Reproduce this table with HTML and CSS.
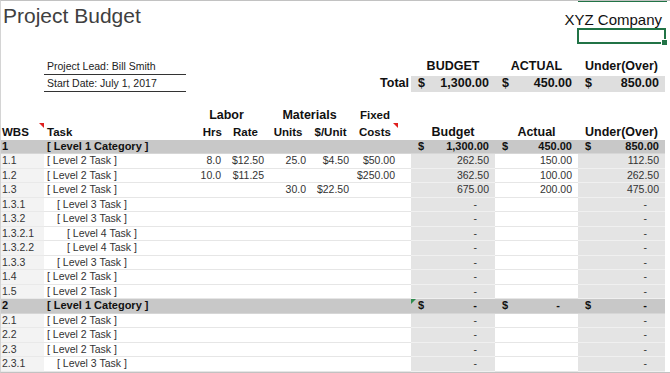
FILE: index.html
```html
<!DOCTYPE html>
<html lang="en">
<head>
<meta charset="utf-8">
<title>Project Budget</title>
<link rel="stylesheet" href="styles.css">
</head>
<body>
<div class="sheet">
  <div class="top grid">
    <h1 class="title">Project Budget</h1>
    <div class="company">XYZ Company</div>
    <div class="selbox"></div>
  </div>

  <div class="summary grid">
    <div class="lead r1">Project Lead: Bill Smith</div>
    <div class="lead r2">Start Date: July 1, 2017</div>
    <div class="sumhead c9">BUDGET</div>
    <div class="sumhead c10">ACTUAL</div>
    <div class="sumhead c11">Under(Over)</div>
    <div class="totlabel">Total</div>
    <div class="tot c9"><span>$</span><span>1,300.00</span></div>
    <div class="tot c10"><span>$</span><span>450.00</span></div>
    <div class="tot c11"><span>$</span><span>850.00</span></div>
  </div>

  <div class="thead grid">
    <div class="h1 labor">Labor</div>
    <div class="h1 materials">Materials</div>
    <div class="h1 small fixed">Fixed</div>
    <div class="h2 small wbsh note">WBS</div>
    <div class="h2 small taskh">Task</div>
    <div class="h2 small hrs">Hrs</div>
    <div class="h2 small ctr">Rate</div>
    <div class="h2 small ctr">Units</div>
    <div class="h2 small ctr">$/Unit</div>
    <div class="h2 small ctr note">Costs</div>
    <div class="h2 spacer"></div>
    <div class="h2 big">Budget</div>
    <div class="h2 big">Actual</div>
    <div class="h2 big">Under(Over)</div>
  </div>

  <div class="tbody">
    <div class="row cat grid">
      <div class="c wbs">1</div><div class="c task">[ Level 1 Category ]</div>
      <div class="c"></div><div class="c"></div><div class="c"></div><div class="c"></div><div class="c"></div><div class="c"></div>
      <div class="c acc"><span>$</span><span>1,300.00</span></div>
      <div class="c acc"><span>$</span><span>450.00</span></div>
      <div class="c acc"><span>$</span><span>850.00</span></div>
    </div>
    <div class="row grid">
      <div class="c wbs">1.1</div><div class="c task">[ Level 2 Task ]</div>
      <div class="c n">8.0</div><div class="c n">$12.50</div><div class="c n">25.0</div><div class="c n">$4.50</div><div class="c n">$50.00</div><div class="c"></div>
      <div class="c g v">262.50</div><div class="c v">150.00</div><div class="c g v">112.50</div>
    </div>
    <div class="row grid">
      <div class="c wbs">1.2</div><div class="c task">[ Level 2 Task ]</div>
      <div class="c n">10.0</div><div class="c n">$11.25</div><div class="c n"></div><div class="c n"></div><div class="c n">$250.00</div><div class="c"></div>
      <div class="c g v">362.50</div><div class="c v">100.00</div><div class="c g v">262.50</div>
    </div>
    <div class="row grid">
      <div class="c wbs">1.3</div><div class="c task">[ Level 2 Task ]</div>
      <div class="c n"></div><div class="c n"></div><div class="c n">30.0</div><div class="c n">$22.50</div><div class="c n"></div><div class="c"></div>
      <div class="c g v">675.00</div><div class="c v">200.00</div><div class="c g v">475.00</div>
    </div>
    <div class="row grid">
      <div class="c wbs">1.3.1</div><div class="c task l3">[ Level 3 Task ]</div>
      <div class="c"></div><div class="c"></div><div class="c"></div><div class="c"></div><div class="c"></div><div class="c"></div>
      <div class="c g d">-</div><div class="c"></div><div class="c g d">-</div>
    </div>
    <div class="row grid">
      <div class="c wbs">1.3.2</div><div class="c task l3">[ Level 3 Task ]</div>
      <div class="c"></div><div class="c"></div><div class="c"></div><div class="c"></div><div class="c"></div><div class="c"></div>
      <div class="c g d">-</div><div class="c"></div><div class="c g d">-</div>
    </div>
    <div class="row grid">
      <div class="c wbs">1.3.2.1</div><div class="c task l4">[ Level 4 Task ]</div>
      <div class="c"></div><div class="c"></div><div class="c"></div><div class="c"></div><div class="c"></div><div class="c"></div>
      <div class="c g d">-</div><div class="c"></div><div class="c g d">-</div>
    </div>
    <div class="row grid">
      <div class="c wbs">1.3.2.2</div><div class="c task l4">[ Level 4 Task ]</div>
      <div class="c"></div><div class="c"></div><div class="c"></div><div class="c"></div><div class="c"></div><div class="c"></div>
      <div class="c g d">-</div><div class="c"></div><div class="c g d">-</div>
    </div>
    <div class="row grid">
      <div class="c wbs">1.3.3</div><div class="c task l3">[ Level 3 Task ]</div>
      <div class="c"></div><div class="c"></div><div class="c"></div><div class="c"></div><div class="c"></div><div class="c"></div>
      <div class="c g d">-</div><div class="c"></div><div class="c g d">-</div>
    </div>
    <div class="row grid">
      <div class="c wbs">1.4</div><div class="c task">[ Level 2 Task ]</div>
      <div class="c"></div><div class="c"></div><div class="c"></div><div class="c"></div><div class="c"></div><div class="c"></div>
      <div class="c g d">-</div><div class="c"></div><div class="c g d">-</div>
    </div>
    <div class="row grid">
      <div class="c wbs">1.5</div><div class="c task">[ Level 2 Task ]</div>
      <div class="c"></div><div class="c"></div><div class="c"></div><div class="c"></div><div class="c"></div><div class="c"></div>
      <div class="c g d">-</div><div class="c"></div><div class="c g d">-</div>
    </div>
    <div class="row cat grid">
      <div class="c wbs">2</div><div class="c task">[ Level 1 Category ]</div>
      <div class="c"></div><div class="c"></div><div class="c"></div><div class="c"></div><div class="c"></div><div class="c"></div>
      <div class="c acc dashacc flag"><span>$</span><span>-</span></div>
      <div class="c acc dashacc"><span>$</span><span>-</span></div>
      <div class="c acc dashacc"><span>$</span><span>-</span></div>
    </div>
    <div class="row grid">
      <div class="c wbs">2.1</div><div class="c task">[ Level 2 Task ]</div>
      <div class="c"></div><div class="c"></div><div class="c"></div><div class="c"></div><div class="c"></div><div class="c"></div>
      <div class="c g d">-</div><div class="c"></div><div class="c g d">-</div>
    </div>
    <div class="row grid">
      <div class="c wbs">2.2</div><div class="c task">[ Level 2 Task ]</div>
      <div class="c"></div><div class="c"></div><div class="c"></div><div class="c"></div><div class="c"></div><div class="c"></div>
      <div class="c g d">-</div><div class="c"></div><div class="c g d">-</div>
    </div>
    <div class="row grid">
      <div class="c wbs">2.3</div><div class="c task">[ Level 2 Task ]</div>
      <div class="c"></div><div class="c"></div><div class="c"></div><div class="c"></div><div class="c"></div><div class="c"></div>
      <div class="c g d">-</div><div class="c"></div><div class="c g d">-</div>
    </div>
    <div class="row grid">
      <div class="c wbs">2.3.1</div><div class="c task l3">[ Level 3 Task ]</div>
      <div class="c"></div><div class="c"></div><div class="c"></div><div class="c"></div><div class="c"></div><div class="c"></div>
      <div class="c g d">-</div><div class="c"></div><div class="c g d">-</div>
    </div>
  </div>
</div>
</body>
</html>
```
FILE: styles.css
```css
:root {
  --cols: 43px 142px 38px 43px 42px 43px 46px 13px 84px 83px 87px;
  --green: #217346;
}
html, body {
  margin: 0;
  padding: 0;
  background: #fff;
}
body {
  font-family: "Liberation Sans", Arial, sans-serif;
  color: #333;
}
.sheet {
  width: 670px;
  height: 373px;
  box-sizing: border-box;
  border-top: 1px solid #c2c2c2;
  border-bottom: 1px solid #c2c2c2;
  border-left: 1px solid #d4d4d4;
  position: relative;
  overflow: hidden;
}
.sheet::before {
  content: "";
  position: absolute;
  top: -1px;
  left: 577px;
  width: 89px;
  height: 2px;
  background: var(--green);
}
.grid {
  display: grid;
  grid-template-columns: var(--cols);
}

/* top */
.top {
  grid-template-rows: 26px 17px;
}
.title {
  grid-column: 1 / 8;
  grid-row: 1;
  margin: 0;
  padding: 3px 0 0 2px;
  font-size: 21px;
  line-height: 24px;
  font-weight: normal;
  color: #404040;
  white-space: nowrap;
}
.company {
  grid-column: 9 / 12;
  grid-row: 1;
  text-align: right;
  padding: 10px 3px 0 0;
  font-size: 15px;
  line-height: 17px;
  color: #111;
}
.selbox {
  grid-column: 11;
  grid-row: 2;
  margin: 1px -1px 0 -1px;
  border: 2px solid var(--green);
  height: 12px;
  position: relative;
}
.selbox::after {
  content: "";
  position: absolute;
  right: -4px;
  bottom: -4px;
  width: 5px;
  height: 5px;
  background: var(--green);
  border: 1px solid #fff;
}

/* summary */
.summary {
  grid-template-rows: 13px 18px 17px;
}
.lead {
  grid-column: 2;
  font-size: 10.5px;
  line-height: 13px;
  color: #222;
  padding: 0 0 1px 3px;
  border-bottom: 1px solid #333;
  display: flex;
  align-items: flex-end;
  white-space: nowrap;
}
.lead.r1 { grid-row: 2; }
.lead.r2 { grid-row: 3; }
.sumhead {
  grid-row: 2;
  font-weight: bold;
  font-size: 12.5px;
  line-height: 15px;
  color: #111;
  text-align: center;
  align-self: end;
  padding-bottom: 1px;
}
.c9 { grid-column: 9; }
.c10 { grid-column: 10; }
.c11 { grid-column: 11; }
.totlabel {
  grid-column: 7 / 9;
  grid-row: 3;
  text-align: right;
  font-weight: bold;
  font-size: 12.5px;
  line-height: 15px;
  color: #111;
  align-self: end;
  padding: 0 2px 1px 0;
}
.tot {
  grid-row: 3;
  margin-top: 1px;
  background: #dedede;
  display: flex;
  justify-content: space-between;
  align-items: flex-end;
  padding: 0 6px 1px 7px;
  font-weight: bold;
  font-size: 12.5px;
  line-height: 15px;
  color: #111;
}

/* table header */
.thead {
  margin-top: 15px;
  grid-template-rows: 16px 16.5px;
}
.h1 {
  grid-row: 1;
  font-weight: bold;
  font-size: 12.5px;
  line-height: 14px;
  color: #111;
  text-align: center;
  align-self: end;
  padding-bottom: 1px;
}
.labor { grid-column: 3 / 5; }
.materials { grid-column: 5 / 7; }
.fixed { grid-column: 7; }
.h2 {
  grid-row: 2;
  font-weight: bold;
  font-size: 12.5px;
  line-height: 14px;
  color: #111;
  text-align: center;
  align-self: stretch;
  display: flex;
  align-items: flex-end;
  justify-content: center;
  padding-bottom: 1px;
  position: relative;
}
.small { font-size: 11.5px; }
.h1.small { line-height: 14px; }
.wbsh { justify-content: flex-start; padding-left: 1px; }
.taskh { justify-content: flex-start; padding-left: 3px; }
.hrs { justify-content: flex-end; padding-right: 2px; }
.note::after {
  content: "";
  position: absolute;
  top: 0;
  right: 0;
  border-left: 5px solid transparent;
  border-top: 5px solid #e0201e;
}

/* body */
.tbody {
  display: grid;
  grid-auto-rows: 14.5px;
}
.row {
  font-size: 10.5px;
}
.c {
  box-sizing: border-box;
  height: 14.5px;
  line-height: 13.5px;
  border-bottom: 1px solid #e6e6e6;
  white-space: nowrap;
  position: relative;
}
.wbs {
  background: #f3f3f3;
  padding-left: 1px;
  border-bottom-color: #e9e9e9;
}
.task { padding-left: 3px; }
.task.l3 { padding-left: 13px; }
.task.l4 { padding-left: 23px; }
.n { text-align: right; padding-right: 3px; }
.g {
  background: #e4e4e4;
  border-bottom-color: #f0f0f0;
}
.v { text-align: right; padding-right: 6px; }
.d { text-align: right; padding-right: 18px; }
.acc {
  display: flex;
  justify-content: space-between;
  padding: 0 6px 0 7px;
}
.dashacc { padding-right: 18px; }
.cat .c {
  background: #c8c8c8;
  border-bottom-color: #d6d6d6;
  font-weight: bold;
  font-size: 11px;
  color: #111;
}
.flag::before {
  content: "";
  position: absolute;
  top: 0;
  left: 0;
  border-right: 5px solid transparent;
  border-top: 5px solid #2e8b4e;
}
```
